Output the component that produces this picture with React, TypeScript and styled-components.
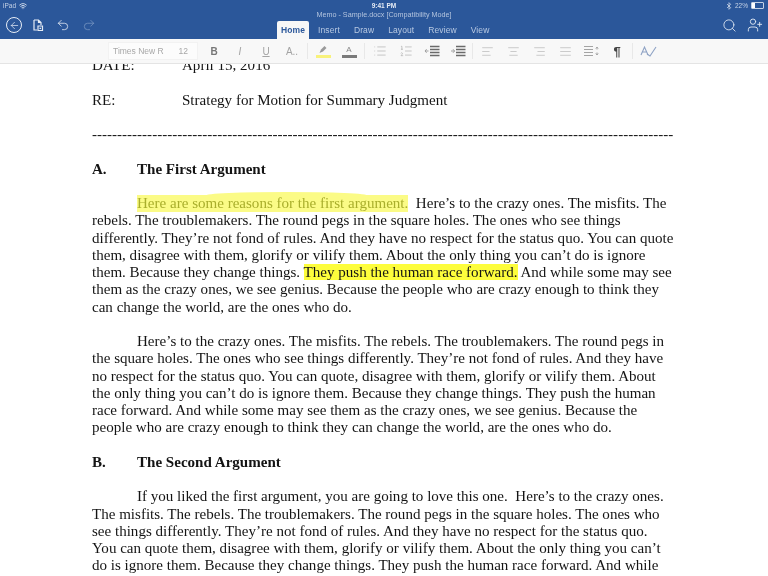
import React from 'react';
import styled, { createGlobalStyle } from 'styled-components';
import {
  AlignCenter,
  AlignJustify,
  AlignLeft,
  AlignRight,
  ArrowLeft,
  Bluetooth,
  List,
  ListOrdered,
  Redo2,
  Search,
  Undo2,
  UserPlus,
  Wifi,
} from 'lucide-react';

const GlobalStyle = createGlobalStyle`
  html, body {
    margin: 0;
    padding: 0;
    background: #ffffff;
  }
`;

const TABS = ['Home', 'Insert', 'Draw', 'Layout', 'Review', 'View'];

const IndentIcon: React.FC<{ $out?: boolean }> = ({ $out }) => (
  <svg width="16" height="12" viewBox="0 0 16 12" fill="none" stroke="#6a6a6a">
    <path d="M6 1.5h9.5M6 4.5h9.5M6 7.5h9.5M6 10.5h9.5" strokeWidth="1.3" />
    {$out ? (
      <path d="M4.5 6H1M2.6 4.2 1 6l1.6 1.8" stroke="#a0a0a0" strokeWidth="1" />
    ) : (
      <path d="M1 6h3.5M3 4.2 4.6 6 3 7.8" stroke="#a0a0a0" strokeWidth="1" />
    )}
  </svg>
);

const App: React.FC = () => {
  return (
    <Screen>
      <GlobalStyle />
      <Header>
        <StatusBar>
          <StatusLeft>
            iPad <Wifi size={8} strokeWidth={3} />
          </StatusLeft>
          <Clock>9:41 PM</Clock>
          <StatusRight>
            <Bluetooth size={8} strokeWidth={2.5} />
            22%
            <Battery>
              <BatteryFill />
            </Battery>
          </StatusRight>
        </StatusBar>
        <DocTitle>Memo - Sample.docx [Compatibility Mode]</DocTitle>
        <NavRow>
          <NavLeft>
            <BackCircle>
              <ArrowLeft size={11} strokeWidth={1.6} />
            </BackCircle>
            <svg width="12" height="13" viewBox="0 0 12 13" fill="none" stroke="#e6ecf5" strokeWidth="1.2">
              <path d="M2 1h4.5L9 3.5V6M2 1v10h3M6.5 1v2.5H9" />
              <path d="M6 7h4.5v4.5H6zM7.5 9.3h1.6" />
            </svg>
            <Undo2 size={14} strokeWidth={1.4} color="#dfe7f2" />
            <Redo2 size={14} strokeWidth={1.2} color="#7f9cc6" />
          </NavLeft>
          <Tabs>
            {TABS.map((tab) => (
              <Tab key={tab} $active={tab === 'Home'}>
                {tab}
              </Tab>
            ))}
          </Tabs>
          <NavRight>
            <Search size={15} strokeWidth={1.4} />
            <UserPlus size={16} strokeWidth={1.4} />
          </NavRight>
        </NavRow>
      </Header>

      <Ribbon>
        <FontBox>
          <FontName>Times New R</FontName>
          <FontSize>12</FontSize>
        </FontBox>
        <Tool $bold>B</Tool>
        <Tool $italic>I</Tool>
        <Tool $underline>U</Tool>
        <Tool>A..</Tool>
        <Divider />
        <Tool>
          <Swatch $color="#f8f27c">
            <svg width="10" height="9" viewBox="0 0 10 9" fill="#9a9a9a">
              <path d="M1.5 8 L3 4.5 L6.5 1 L8.5 3 L5 6.5 Z" />
            </svg>
          </Swatch>
        </Tool>
        <Tool>
          <Swatch $color="#7a7a7a">A</Swatch>
        </Tool>
        <Divider />
        <Tool>
          <List size={14} strokeWidth={1} />
        </Tool>
        <Tool>
          <ListOrdered size={14} strokeWidth={1} />
        </Tool>
        <Tool $dark>
          <IndentIcon $out />
        </Tool>
        <Tool $dark>
          <IndentIcon />
        </Tool>
        <Divider $tight />
        <Tool>
          <AlignLeft size={13} strokeWidth={1} />
        </Tool>
        <Tool>
          <AlignCenter size={13} strokeWidth={1} />
        </Tool>
        <Tool>
          <AlignRight size={13} strokeWidth={1} />
        </Tool>
        <Tool>
          <AlignJustify size={13} strokeWidth={1} />
        </Tool>
        <Tool>
          <svg width="15" height="12" viewBox="0 0 15 12" fill="none" stroke="#a4a4a4" strokeWidth="1">
            <path d="M0 1.5h9M0 4.5h9M0 7.5h9M0 10.5h9" />
            <path d="M13 2.5v2M13 7.5v2M11.8 3.5 13 2l1.2 1.5M11.8 8.5 13 10l1.2-1.5" />
          </svg>
        </Tool>
        <Tool $pilcrow>¶</Tool>
        <Divider />
        <Tool>
          <svg width="17" height="12" viewBox="0 0 17 12" fill="none" stroke="#8ea2c4" strokeWidth="1.1">
            <path d="M1 10 L4.5 2 L8 10 M2.5 7 H6.5" />
            <path d="M7 9 L10 11 L16 2" />
          </svg>
        </Tool>
      </Ribbon>

      <Page>
        <Line $clipped>
          <Label>DATE:</Label>April 15, 2016
        </Line>
        <Gap />
        <Line>
          <Label>RE:</Label>Strategy for Motion for Summary Judgment
        </Line>
        <Gap />
        <Line>{'-'.repeat(116)}</Line>
        <Gap />
        <Heading>
          <HeadingMark>A.</HeadingMark>The First Argument
        </Heading>
        <Gap />
        <Line>
          <Indent />
          <SoftHighlight>Here are some reasons for the first argument.</SoftHighlight>
          {'  '}Here’s to the crazy ones. The misfits. The
        </Line>
        <Line>rebels. The troublemakers. The round pegs in the square holes. The ones who see things</Line>
        <Line>differently. They’re not fond of rules. And they have no respect for the status quo. You can quote</Line>
        <Line>them, disagree with them, glorify or vilify them. About the only thing you can’t do is ignore</Line>
        <Line>
          them. Because they change things. <Highlight>They push the human race forward.</Highlight> And while some may see
        </Line>
        <Line>them as the crazy ones, we see genius. Because the people who are crazy enough to think they</Line>
        <Line>can change the world, are the ones who do.</Line>
        <Gap />
        <Line>
          <Indent />
          Here’s to the crazy ones. The misfits. The rebels. The troublemakers. The round pegs in
        </Line>
        <Line>the square holes. The ones who see things differently. They’re not fond of rules. And they have</Line>
        <Line>no respect for the status quo. You can quote, disagree with them, glorify or vilify them. About</Line>
        <Line>the only thing you can’t do is ignore them. Because they change things. They push the human</Line>
        <Line>race forward. And while some may see them as the crazy ones, we see genius. Because the</Line>
        <Line>people who are crazy enough to think they can change the world, are the ones who do.</Line>
        <Gap />
        <Heading>
          <HeadingMark>B.</HeadingMark>The Second Argument
        </Heading>
        <Gap />
        <Line>
          <Indent />
          If you liked the first argument, you are going to love this one.{'  '}Here’s to the crazy ones.
        </Line>
        <Line>The misfits. The rebels. The troublemakers. The round pegs in the square holes. The ones who</Line>
        <Line>see things differently. They’re not fond of rules. And they have no respect for the status quo.</Line>
        <Line>You can quote them, disagree with them, glorify or vilify them. About the only thing you can’t</Line>
        <Line>do is ignore them. Because they change things. They push the human race forward. And while</Line>
      </Page>
    </Screen>
  );
};

export default App;

// ===== Styles =====

const Screen = styled.div`
  width: 768px;
  height: 576px;
  overflow: hidden;
  display: flex;
  flex-direction: column;
  background: #ffffff;
  font-family: 'Liberation Sans', Arial, sans-serif;
  filter: blur(0.3px);
`;

const Header = styled.header`
  flex: none;
  height: 39px;
  background: #2b579a;
  color: #dfe7f2;
  display: flex;
  flex-direction: column;
  position: relative;
`;

const StatusBar = styled.div`
  height: 11px;
  padding: 0 4px 0 3px;
  display: flex;
  align-items: center;
  justify-content: space-between;
  font-size: 6.5px;
  line-height: 11px;
`;

const StatusLeft = styled.span`
  display: inline-flex;
  align-items: center;
  gap: 3px;
  color: #c5d2e6;
`;

const Clock = styled.span`
  font-weight: 700;
  color: #e6ecf5;
  margin-left: 16px;
`;

const StatusRight = styled.span`
  display: inline-flex;
  align-items: center;
  gap: 2px;
  color: #c5d2e6;
`;

const Battery = styled.span`
  width: 11px;
  height: 5px;
  border: 1px solid #c5d2e6;
  border-radius: 1px;
  margin-left: 1px;
  display: inline-block;
`;

const BatteryFill = styled.span`
  display: block;
  width: 3px;
  height: 100%;
  background: #ffffff;
`;

const DocTitle = styled.div`
  height: 8px;
  text-align: center;
  font-size: 7.2px;
  line-height: 8px;
  color: #b3c4de;
`;

const NavRow = styled.div`
  height: 20px;
  display: flex;
  align-items: flex-end;
`;

const NavLeft = styled.div`
  width: 277px;
  height: 28px;
  margin-top: -8px;
  padding-left: 6px;
  box-sizing: border-box;
  display: flex;
  align-items: center;
  gap: 12px;
`;

const BackCircle = styled.span`
  width: 14px;
  height: 14px;
  border: 1px solid #e6ecf5;
  border-radius: 50%;
  margin-right: -2px;
  display: flex;
  align-items: center;
  justify-content: center;
`;

const Tabs = styled.nav`
  display: flex;
  gap: 14px;
  height: 18px;
`;

const Tab = styled.span<{ $active?: boolean }>`
  height: 18px;
  line-height: 19px;
  font-size: 8.5px;
  letter-spacing: 0.1px;
  padding: 0 ${(p) => (p.$active ? '4px' : '0')};
  margin-right: ${(p) => (p.$active ? '-5px' : '0')};
  border-radius: 2px 2px 0 0;
  background: ${(p) => (p.$active ? '#f7f7f7' : 'transparent')};
  color: ${(p) => (p.$active ? '#2b579a' : '#b8c9e2')};
  font-weight: ${(p) => (p.$active ? 700 : 400)};
`;

const NavRight = styled.div`
  margin-left: auto;
  height: 28px;
  margin-top: -8px;
  padding-right: 5px;
  display: flex;
  align-items: center;
  gap: 10px;
`;

const Ribbon = styled.div`
  flex: none;
  height: 25px;
  background: #f8f8f8;
  border-bottom: 1px solid #e4e4e4;
  padding-left: 108px;
  box-sizing: border-box;
  display: flex;
  align-items: center;
`;

const FontBox = styled.div`
  width: 90px;
  height: 18px;
  box-sizing: border-box;
  background: #fcfcfc;
  border: 1px solid #f2f2f2;
  padding: 0 4px;
  margin-right: 3px;
  display: flex;
  align-items: center;
  justify-content: space-between;
  font-size: 8.5px;
  color: #a8a8a8;
`;

const FontName = styled.span`
  width: 58px;
  overflow: hidden;
  white-space: nowrap;
`;

const FontSize = styled.span`
  margin-right: 5px;
`;

const Tool = styled.span<{
  $bold?: boolean;
  $italic?: boolean;
  $underline?: boolean;
  $dark?: boolean;
  $pilcrow?: boolean;
}>`
  flex: none;
  width: 26px;
  height: 18px;
  display: flex;
  align-items: center;
  justify-content: center;
  font-size: ${(p) => (p.$pilcrow ? '13px' : '10px')};
  font-weight: ${(p) => (p.$bold || p.$pilcrow ? 700 : 400)};
  font-style: ${(p) => (p.$italic ? 'italic' : 'normal')};
  text-decoration: ${(p) => (p.$underline ? 'underline' : 'none')};
  color: ${(p) => (p.$pilcrow ? '#444444' : p.$bold ? '#777777' : p.$dark ? '#666666' : '#a4a4a4')};
`;

const Divider = styled.span<{ $tight?: boolean }>`
  flex: none;
  width: 1px;
  height: 16px;
  margin: 0 ${(p) => (p.$tight ? '1px' : '2px')};
  background: #e8e8e8;
`;

const Swatch = styled.span<{ $color: string }>`
  width: 15px;
  height: 13px;
  box-sizing: border-box;
  border-bottom: 3px solid ${(p) => p.$color};
  font-size: 8px;
  line-height: 10px;
  text-align: center;
  color: #888888;
  display: flex;
  justify-content: center;
`;

const Page = styled.main`
  flex: 1;
  overflow: hidden;
  isolation: isolate;
  padding-left: 92px;
  background: #ffffff;
  font-family: 'Liberation Serif', 'Times New Roman', serif;
  font-size: 15.05px;
  line-height: 17.25px;
  color: #141414;
`;

const Line = styled.div<{ $clipped?: boolean }>`
  height: 17.25px;
  white-space: pre;
  margin-top: ${(p) => (p.$clipped ? '-7px' : '0')};
`;

const Gap = styled.div`
  height: 17.25px;
`;

const Heading = styled(Line)`
  font-weight: 700;
`;

const Label = styled.span`
  display: inline-block;
  width: 90px;
`;

const HeadingMark = styled.span`
  display: inline-block;
  width: 45px;
`;

const Indent = styled.span`
  display: inline-block;
  width: 45px;
`;

const SoftHighlight = styled.span`
  position: relative;
  display: inline-block;
  background: #fbfb86;
  color: #a9ae2c;

  &::before {
    content: '';
    position: absolute;
    left: 25%;
    right: 15%;
    top: -3px;
    height: 7px;
    border-radius: 50%;
    background: #fbfb86;
    z-index: -1;
  }
`;

const Highlight = styled.span`
  background: #fdfd3c;
`;
